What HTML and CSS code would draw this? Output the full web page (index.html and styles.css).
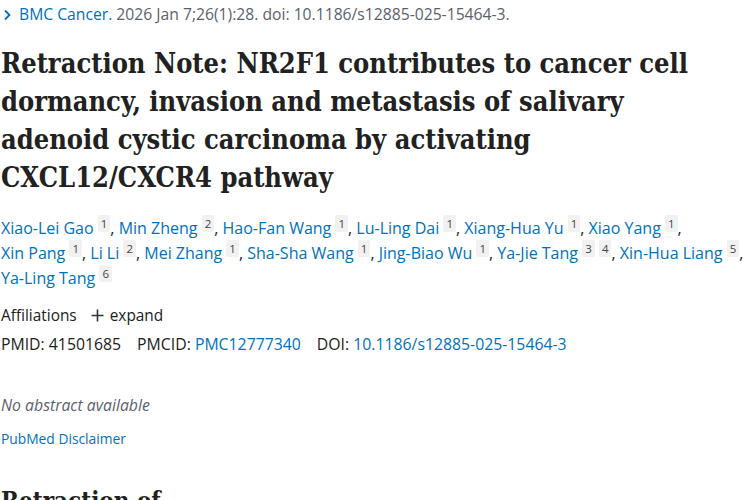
FILE: index.html
```html
<!DOCTYPE html>
<html>
<head>
<meta charset="utf-8">
<link rel="stylesheet" href="styles.css">
</head>
<body>
<main class="page">
  <div class="cit"><svg class="chev" width="9" height="12" viewBox="0 0 9 12"><path d="M2 1.5 L6.5 6 L2 10.5" fill="none" stroke="#0071bc" stroke-width="1.8"/></svg><a class="link">BMC Cancer.</a> <span class="cit-text">2026 Jan 7;26(1):28. doi: 10.1186/s12885-025-15464-3.</span></div>
  <h1 class="title">Retraction Note: NR2F1 contributes to cancer cell dormancy, invasion and metastasis of salivary adenoid cystic carcinoma by activating CXCL12/CXCR4 pathway</h1>
  <div class="authors">
    <a class="link">Xiao-Lei Gao</a> <sup class="aff">1</sup>, <a class="link">Min Zheng</a> <sup class="aff">2</sup>, <a class="link">Hao-Fan Wang</a> <sup class="aff">1</sup>, <a class="link">Lu-Ling Dai</a> <sup class="aff">1</sup>, <a class="link">Xiang-Hua Yu</a> <sup class="aff">1</sup>, <a class="link">Xiao Yang</a> <sup class="aff">1</sup>,<br>
    <a class="link">Xin Pang</a> <sup class="aff">1</sup>, <a class="link">Li Li</a> <sup class="aff">2</sup>, <a class="link">Mei Zhang</a> <sup class="aff">1</sup>, <a class="link">Sha-Sha Wang</a> <sup class="aff">1</sup>, <a class="link">Jing-Biao Wu</a> <sup class="aff">1</sup>, <a class="link">Ya-Jie Tang</a> <sup class="aff">3</sup> <sup class="aff">4</sup>, <a class="link">Xin-Hua Liang</a> <sup class="aff">5</sup>,<br>
    <a class="link">Ya-Ling Tang</a> <sup class="aff">6</sup>
  </div>
  <div class="affil">Affiliations <span class="expand"><svg class="plus" width="13" height="13" viewBox="0 0 13 13"><path d="M6.5 0.5 V12.5 M0.5 6.5 H12.5" fill="none" stroke="#333" stroke-width="1.6"/></svg> expand</span></div>
  <div class="ids">
    <span class="id">PMID: 41501685</span>
    <span class="id">PMCID: <a class="link">PMC12777340</a></span>
    <span class="id">DOI: <a class="link">10.1186/s12885-025-15464-3</a></span>
  </div>
  <p class="noabs">No abstract available</p>
  <a class="link disclaimer">PubMed Disclaimer</a>
  <h2 class="sub">Retraction of</h2>
</main>
</body>
</html>
```

FILE: styles.css
```css
html, body {
  margin: 0;
  padding: 0;
  background: #fff;
}
body {
  font-family: "Open Sans", "Noto Sans", sans-serif;
  color: #212121;
  overflow: hidden;
  height: 500px;
}
.page {
  padding: 0 0 0 1px;
}
.link {
  color: #0071bc;
  text-decoration: none;
}
.cit {
  font-size: 15.7px;
  line-height: 20px;
  padding-top: 4px;
  white-space: nowrap;
}
.chev {
  margin: 0 7px 0 2px;
  vertical-align: -1px;
}
.cit-text {
  color: #5b616b;
}
.title {
  font-family: "DejaVu Serif", serif;
  font-stretch: condensed;
  font-weight: 700;
  font-size: 27px;
  line-height: 38px;
  margin: 21px 0 0 0;
  color: #212121;
  max-width: 710px;
}
.authors {
  font-size: 16px;
  line-height: 25px;
  margin-top: 19px;
  color: #212121;
}
.aff {
  font-size: 11.5px;
  line-height: 1;
  vertical-align: 6px;
  background: #f1f1f1;
  color: #444;
  padding: 1px 3px;
  border-radius: 2px;
}
.affil {
  margin-top: 14px;
  font-size: 15.4px;
  line-height: 22px;
}
.expand {
  margin-left: 10px;
}
.plus {
  vertical-align: -1px;
  margin-right: 2px;
}
.ids {
  margin-top: 6px;
  font-size: 15.8px;
  line-height: 22px;
  display: flex;
  gap: 16px;
}
.noabs {
  margin: 39px 0 0 0;
  font-size: 15.8px;
  font-style: italic;
  color: #5b616b;
  line-height: 22px;
}
.disclaimer {
  display: block;
  margin-top: 14px;
  font-size: 13.8px;
  line-height: 18px;
}
.sub {
  font-family: "DejaVu Serif", serif;
  font-stretch: condensed;
  font-weight: 700;
  font-size: 24px;
  margin: 38px 0 0 0;
}
```
